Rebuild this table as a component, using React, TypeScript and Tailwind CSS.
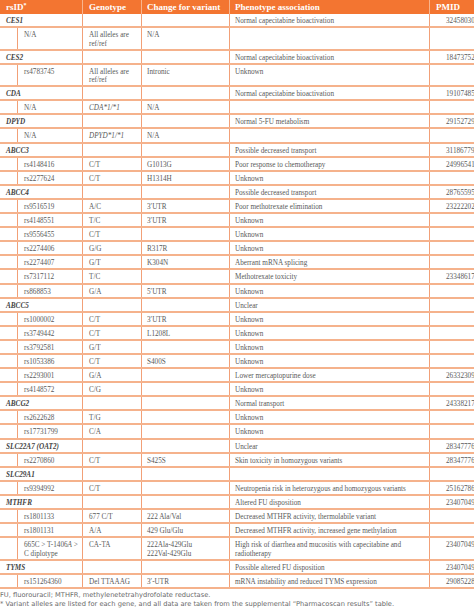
import type { ReactNode } from "react";

type Row = {
  gene?: ReactNode;
  id?: ReactNode;
  geno?: ReactNode;
  change?: ReactNode;
  pheno?: ReactNode;
  pmid?: string;
  tall?: boolean;
};

const rows: Row[] = [
  { gene: "CES1", pheno: "Normal capecitabine bioactivation", pmid: "32458030" },
  { id: "N/A", geno: <>All alleles are<br />ref/ref</>, change: "N/A", tall: true },
  { gene: "CES2", pheno: "Normal capecitabine bioactivation", pmid: "18473752" },
  { id: "rs4783745", geno: <>All alleles are<br />ref/ref</>, change: "Intronic", pheno: "Unknown", tall: true },
  { gene: "CDA", pheno: "Normal capecitabine bioactivation", pmid: "19107485" },
  { id: "N/A", geno: <i>CDA*1/*1</i>, change: "N/A" },
  { gene: "DPYD", pheno: "Normal 5-FU metabolism", pmid: "29152729" },
  { id: "N/A", geno: <i>DPYD*1/*1</i>, change: "N/A" },
  { gene: "ABCC3", pheno: "Possible decreased transport", pmid: "31186779" },
  { id: "rs4148416", geno: "C/T", change: "G1013G", pheno: "Poor response to chemotherapy", pmid: "24996541" },
  { id: "rs2277624", geno: "C/T", change: "H1314H", pheno: "Unknown" },
  { gene: "ABCC4", pheno: "Possible decreased transport", pmid: "28765595" },
  { id: "rs9516519", geno: "A/C", change: "3′UTR", pheno: "Poor methotrexate elimination", pmid: "23222202" },
  { id: "rs4148551", geno: "T/C", change: "3′UTR", pheno: "Unknown" },
  { id: "rs9556455", geno: "C/T", pheno: "Unknown" },
  { id: "rs2274406", geno: "G/G", change: "R317R", pheno: "Unknown" },
  { id: "rs2274407", geno: "G/T", change: "K304N", pheno: "Aberrant mRNA splicing" },
  { id: "rs7317112", geno: "T/C", pheno: "Methotrexate toxicity", pmid: "23348617" },
  { id: "rs868853", geno: "G/A", change: "5′UTR", pheno: "Unknown" },
  { gene: "ABCC5", pheno: "Unclear" },
  { id: "rs1000002", geno: "C/T", change: "3′UTR", pheno: "Unknown" },
  { id: "rs3749442", geno: "C/T", change: "L1208L", pheno: "Unknown" },
  { id: "rs3792581", geno: "G/T", pheno: "Unknown" },
  { id: "rs1053386", geno: "C/T", change: "S400S", pheno: "Unknown" },
  { id: "rs2293001", geno: "G/A", pheno: "Lower mercaptopurine dose", pmid: "26332309" },
  { id: "rs4148572", geno: "C/G", pheno: "Unknown" },
  { gene: "ABCG2", pheno: "Normal transport", pmid: "24338217" },
  { id: "rs2622628", geno: "T/G", pheno: "Unknown" },
  { id: "rs17731799", geno: "C/A", pheno: "Unknown" },
  { gene: "SLC22A7 (OAT2)", pheno: "Unclear", pmid: "28347776" },
  { id: "rs2270860", geno: "C/T", change: "S425S", pheno: "Skin toxicity in homozygous variants", pmid: "28347776" },
  { gene: "SLC29A1" },
  { id: "rs9394992", geno: "C/T", pheno: "Neutropenia risk in heterozygous and homozygous variants", pmid: "25162786" },
  { gene: "MTHFR", pheno: "Altered FU disposition", pmid: "23407049" },
  { id: "rs1801133", geno: "677 C/T", change: "222 Ala/Val", pheno: "Decreased MTHFR activity, thermolabile variant" },
  { id: "rs1801131", geno: "A/A", change: "429 Glu/Glu", pheno: "Decreased MTHFR activity, increased gene methylation" },
  {
    id: <>665C &gt; T-1406<i>A</i> &gt;<br />C diplotype</>,
    geno: "CA-TA",
    change: <>222Ala-429Glu<br />222Val-429Glu</>,
    pheno: <>High risk of diarrhea and mucositis with capecitabine and<br />radiotherapy</>,
    pmid: "23407049",
    tall: true,
  },
  { gene: "TYMS", pheno: "Possible altered FU disposition", pmid: "23407049" },
  { id: "rs151264360", geno: "Del TTAAAG", change: "3′-UTR", pheno: "mRNA instability and reduced TYMS expression", pmid: "29085228" },
];

const grid = "grid grid-cols-[18px_65px_59px_88px_200px_90px]";
const cell = "border-r border-[#f2a077] pt-[3px] leading-[8.5px] whitespace-nowrap";

function TableRow({ r }: { r: Row }) {
  return (
    <div
      className={`${grid} border-b-2 border-[#f5b28c] ${r.tall ? "h-[22.5px]" : "h-[14.1px]"}`}
    >
      {r.gene ? (
        <div className={`${cell} col-span-2 pl-[6px] font-bold italic text-[#444]`}>{r.gene}</div>
      ) : (
        <>
          <div className={cell} />
          <div className={`${cell} pl-[6px]`}>{r.id}</div>
        </>
      )}
      <div className={`${cell} pl-[6px]`}>{r.geno}</div>
      <div className={`${cell} pl-[5px]`}>{r.change}</div>
      <div className={`${cell} pl-[5px]`}>{r.pheno}</div>
      <div className={`${cell} pl-[16px] border-r-0`}>{r.pmid}</div>
    </div>
  );
}

export default function App() {
  return (
    <div className="w-[474px] h-[610px] overflow-hidden bg-white">
      <div className="w-[520px] font-['Liberation_Serif',serif] text-[7.2px] text-[#5a5a5a]">
        <div className={`${grid} h-[14px] bg-[#f37531] text-white font-bold text-[9px] leading-[14px]`}>
          <div className="col-span-2 border-r border-[#f9b48c] pl-[6px]">
            rsID<sup className="text-[6px]">*</sup>
          </div>
          <div className="border-r border-[#f9b48c] pl-[6px]">Genotype</div>
          <div className="border-r border-[#f9b48c] pl-[5px]">Change for variant</div>
          <div className="border-r border-[#f9b48c] pl-[5px]">Phenotype association</div>
          <div className="pl-[6px]">PMID</div>
        </div>
        {rows.map((r, i) => (
          <TableRow key={i} r={r} />
        ))}
      </div>
      <div className="pt-[2px] font-['DejaVu_Sans',sans-serif] text-[6.7px] leading-[9px] text-[#6a6a6a] whitespace-nowrap">
        <p>FU, fluorouracil; MTHFR, methylenetetrahydrofolate reductase.</p>
        <p>* Variant alleles are listed for each gene, and all data are taken from the supplemental “Pharmacoscan results” table.</p>
      </div>
    </div>
  );
}
